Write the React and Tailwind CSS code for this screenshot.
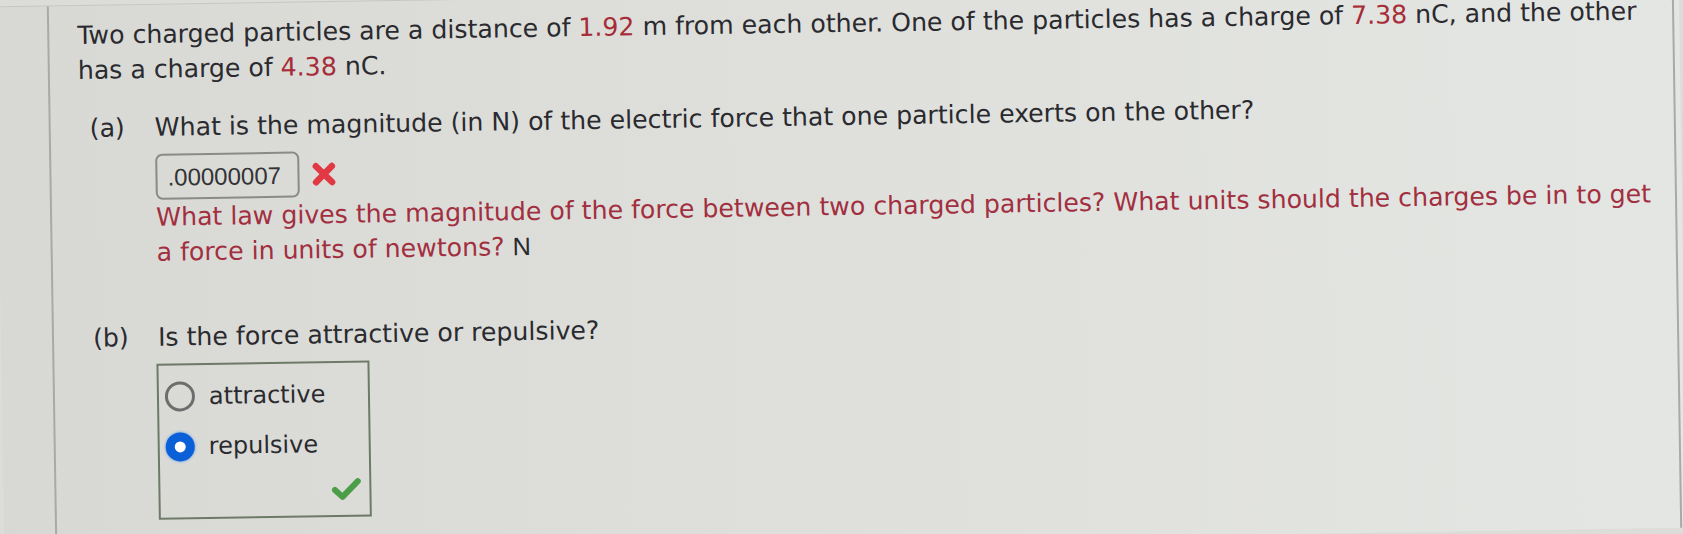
const RedX = () => (
  <svg width="27" height="26" viewBox="0 0 27 26" className="shrink-0">
    <path d="M5.5 5 L21.5 21 M21.5 5 L5.5 21" stroke="#e13844" strokeWidth="6.5" strokeLinecap="round" />
  </svg>
)

const Check = () => (
  <svg width="30" height="23" viewBox="0 0 30 23">
    <path d="M3.5 12 L11 19 L26.5 3.5" fill="none" stroke="#4c9d47" strokeWidth="6" strokeLinecap="round" strokeLinejoin="round" />
  </svg>
)

const Radio = ({ checked }) =>
  checked ? (
    <span className="w-[29px] h-[29px] rounded-full border-[9px] border-[#0b60d8] bg-white shadow-[0_0_3px_#5b93e6] shrink-0" />
  ) : (
    <span className="w-[30px] h-[30px] rounded-full border-[3px] border-[#6d6d6d] shrink-0" />
  )

const Num = ({ children }) => <span className="text-[#a62c37]">{children}</span>

export default function App() {
  return (
    <div className="h-[534px] w-full overflow-hidden bg-[#dcddd9]">
      <div className="-mt-[7px] h-[548px] w-full -rotate-[0.9deg] border-t border-[#c6c7c3] bg-linear-to-r from-[#d8d9d5] via-[#dfe0dc] to-[#e4e6e3]">
        <div className="ml-[51px] h-full w-[1627px] border-x-2 border-[#a9aaa7] pl-[28px] pr-[12px] pt-[12px] font-['DejaVu_Sans',sans-serif] text-[25.2px] leading-[35px] text-[#2a2a2f]">
          <p>
            Two charged particles are a distance of <Num>1.92</Num> m from each other. One of the particles has a charge of <Num>7.38</Num> nC, and the other has a charge of <Num>4.38</Num> nC.
          </p>

          <div className="mt-[23px] flex">
            <span className="w-[76px] shrink-0 pl-[11px]">(a)</span>
            <div className="flex-1">
              <p>What is the magnitude (in N) of the electric force that one particle exerts on the other?</p>
              <div className="mt-[9px] flex items-center gap-[11px]">
                <div className="flex h-[46px] w-[144px] items-center rounded-[7px] border-2 border-[#8a8b88] px-[10px] font-['Liberation_Sans',sans-serif] text-[24px] text-[#333336]">
                  .00000007
                </div>
                <RedX />
              </div>
              <p className="text-[#a22f40]">
                What law gives the magnitude of the force between two charged particles? What units should the charges be in to get a force in units of newtons?{' '}
                <span className="font-['Liberation_Sans',sans-serif] text-[#2a2a2f]">N</span>
              </p>
            </div>
          </div>

          <div className="mt-[50px] flex">
            <span className="w-[76px] shrink-0 pl-[11px]">(b)</span>
            <div className="flex-1">
              <p>Is the force attractive or repulsive?</p>
              <div className="-ml-[2px] mt-[9px] flex h-[156px] w-[213px] flex-col border-2 border-[#6e7a68] pl-[6px] pr-[8px] pb-[14px] pt-[16px] text-[24px]">
                <div className="flex h-[30px] items-center gap-[14px]">
                  <Radio />
                  <span>attractive</span>
                </div>
                <div className="mt-[20px] flex h-[30px] items-center gap-[14px]">
                  <Radio checked />
                  <span>repulsive</span>
                </div>
                <div className="mt-auto flex justify-end">
                  <Check />
                </div>
              </div>
            </div>
          </div>
        </div>
      </div>
    </div>
  )
}
